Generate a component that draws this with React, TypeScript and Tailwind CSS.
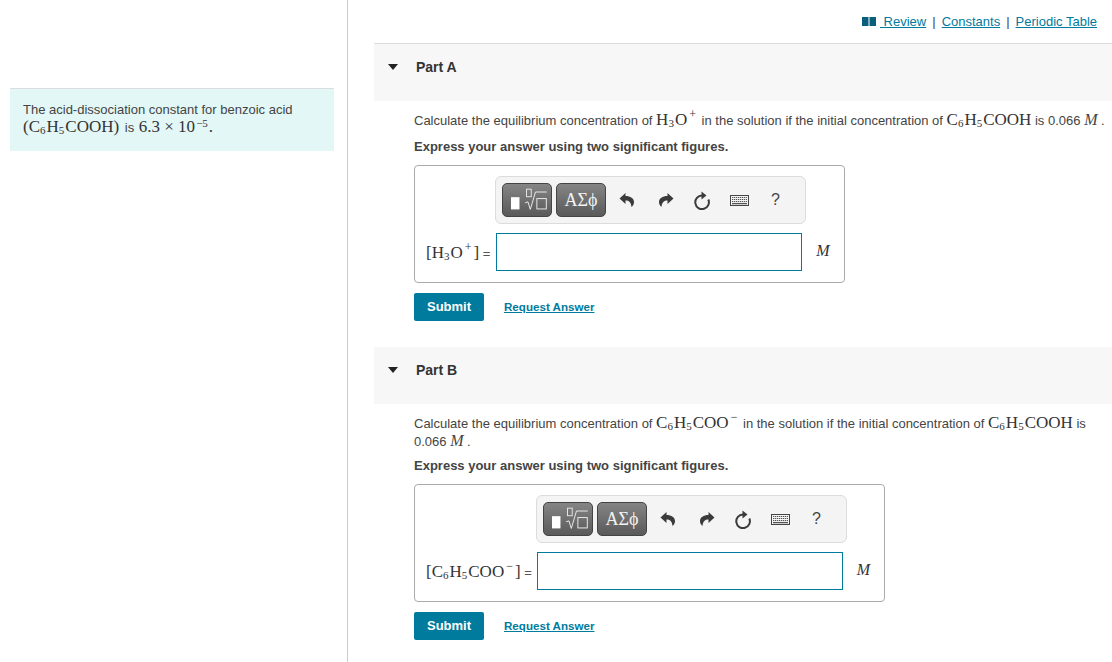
import type { ReactNode } from 'react';

const serif = "font-['Liberation_Serif',serif]";

function Sub({ children }: { children: ReactNode }) {
  return <sub className="static mr-[1px] align-[-2px] text-[11px] leading-none">{children}</sub>;
}

function Sup({ children }: { children: ReactNode }) {
  return <sup className="static ml-[2px] mr-[2px] align-[7px] text-[12px] leading-none">{children}</sup>;
}

function Math({ children }: { children: ReactNode }) {
  return <span className={`${serif} text-[17px] leading-none text-[#333]`}>{children}</span>;
}

function Benzoic() {
  return (
    <Math>
      C<Sub>6</Sub>H<Sub>5</Sub>COOH
    </Math>
  );
}

function UndoIcon({ flip }: { flip?: boolean }) {
  return (
    <svg viewBox="0 0 16 16" className={`h-[16px] w-[16px] ${flip ? '-scale-x-100' : ''}`} fill="#3b3b3b">
      <path d="M6.500 1 .5 6.500l6 5.500V8.500c3.500 0 5.500 1.500 6 6.500 2-1.500 2.500-3.500 2.500-5 0-3.500-3.500-6-8.500-6z" />
    </svg>
  );
}

function ResetIcon() {
  return (
    <svg viewBox="0 0 18 20" className="h-[20px] w-[18px]" fill="none">
      <path d="M9 5.500A6.800 6.800 0 1 0 15.300 9.500" stroke="#3b3b3b" strokeWidth="2" />
      <path d="M8.500 1.500v8l5-4z" fill="#3b3b3b" />
    </svg>
  );
}

function KeyboardIcon() {
  return (
    <svg viewBox="0 0 19 11" className="h-[11px] w-[19px]">
      <rect x="0.500" y="0.500" width="18" height="10" fill="#f4f4f4" stroke="#444" />
      <path d="M2 2.500h15M2 4.500h15M2 6.500h15" stroke="#555" strokeWidth="1.200" strokeDasharray="1.300 .7" />
      <path d="M2 8.600h15" stroke="#555" strokeWidth="1.300" />
    </svg>
  );
}

function TemplateGlyph() {
  return (
    <svg viewBox="0 0 50 34" className="h-full w-full" fill="none">
      <rect x="8" y="14" width="9" height="13" fill="#fff" />
      <rect x="24.500" y="5.500" width="5" height="8" stroke="#e8e8e8" />
      <path d="M23 20l3-1 2.500 8L34 8.500h12" stroke="#eee" strokeWidth="1" />
      <rect x="35.500" y="15.500" width="10" height="11" stroke="#eee" />
    </svg>
  );
}

function Toolbar() {
  const btn =
    'flex h-[34px] w-[50px] items-center justify-center rounded-[5px] border border-[#444] bg-linear-to-b from-[#858585] to-[#5a5a5a]';
  return (
    <div className="flex h-[48px] w-[311px] items-center rounded-[6px] border border-[#dcdcdc] bg-[#f4f4f4] pl-[6px]">
      <div className={btn}>
        <TemplateGlyph />
      </div>
      <div className={`${btn} ml-[4px] ${serif} text-[18px] text-[#f2f2f2]`}>ΑΣϕ</div>
      <div className="ml-[13px]">
        <UndoIcon />
      </div>
      <div className="ml-[23px]">
        <UndoIcon flip />
      </div>
      <div className="ml-[19px]">
        <ResetIcon />
      </div>
      <div className="ml-[19px]">
        <KeyboardIcon />
      </div>
      <div className="ml-[22px] text-[16px] text-[#444]">?</div>
    </div>
  );
}

function AnswerBox({
  label,
  toolbarOffset,
  width,
  unitWidth,
}: {
  label: ReactNode;
  toolbarOffset: string;
  width: string;
  unitWidth: string;
}) {
  return (
    <div className={`rounded-[4px] border border-[#aaa] pb-[11px] pt-[10px] ${width}`}>
      <div className={`flex ${toolbarOffset}`}>
        <Toolbar />
      </div>
      <div className="mt-[9px] flex h-[38px] items-center pl-[11px]">
        <div className="flex-1 whitespace-nowrap text-[#555]">{label}</div>
        <div className="h-[38px] w-[306px] border border-[#007b9e] bg-white" />
        <div className={`${unitWidth} pb-[3px] text-center ${serif} text-[16px] italic text-[#333]`}>M</div>
      </div>
    </div>
  );
}

function Part({ title, children }: { title: string; children: ReactNode }) {
  return (
    <section>
      <div className="flex h-[57px] items-start bg-[#f7f7f7] pl-[14px] pt-[15px]">
        <div className="mt-[5px] h-0 w-0 border-x-[5.500px] border-t-[6px] border-x-transparent border-t-[#222]" />
        <h2 className="ml-[18px] text-[14px] font-bold leading-[16px] text-[#333]">{title}</h2>
      </div>
      <div className="pl-[40px]">{children}</div>
    </section>
  );
}

function Actions() {
  return (
    <div className="mt-[10px] flex items-center">
      <button className="h-[28px] w-[70px] rounded-[2px] bg-[#007b9e] text-[13px] font-bold text-white">Submit</button>
      <a className="ml-[20px] text-[11.6px] font-bold text-[#007b9e] underline">Request Answer</a>
    </div>
  );
}

export default function App() {
  return (
    <div className="flex h-[662px] w-[1112px] overflow-hidden bg-white text-[13px] text-[#444] font-['Liberation_Sans',Arial,sans-serif]">
      <aside className="w-[348px] shrink-0 border-r border-[#ccc] pl-[10px] pr-[13px] pt-[88px]">
        <div className="h-[63px] border-t border-[#d9dde0] bg-[#e2f7f6] pl-[13px] pt-[13px] leading-[16px]">
          The acid-dissociation constant for benzoic acid
          <br />
          <Math>(</Math>
          <Benzoic />
          <Math>)</Math> <span className="ml-[2px]">is</span>{' '}
          <Math>
            <span className="ml-[1px]">6.3 × 10</span>
            <sup className="static ml-[1px] mr-[1px] align-[5px] text-[11px] leading-none">−5</sup>.
          </Math>
        </div>
      </aside>

      <main className="min-w-0 flex-1 pl-[26px]">
        <div className="flex h-[44px] items-start justify-end border-b border-[#ddd] pr-[15px] pt-[14px] leading-[16px]">
          <svg viewBox="0 0 14 9" className="mt-[3px] h-[9px] w-[14px]" fill="#0a5f7c">
            <path d="M0 0h6.500v9H0zM7.500 0H14v9H7.500z" />
          </svg>
          <a className="ml-[4px] whitespace-pre text-[#007b9e] underline"> Review</a>
          <span className="mx-[6px]">|</span>
          <a className="text-[#007b9e] underline">Constants</a>
          <span className="mx-[6px]">|</span>
          <a className="text-[#007b9e] underline">Periodic Table</a>
        </div>

        <Part title="Part A">
          <p className="mt-[7px] whitespace-nowrap leading-[20px]">
            Calculate the equilibrium concentration of{' '}
            <Math>
              H<Sub>3</Sub>O<Sup>+</Sup>
            </Math>{' '}
            in the solution if the initial concentration of <Benzoic /> is 0.066{' '}
            <span className={`${serif} text-[16px] italic`}>M</span> .
          </p>
          <p className="mt-[6px] font-bold leading-[20px]">Express your answer using two significant figures.</p>
          <div className="mt-[8px]">
            <AnswerBox
              width="w-[431px]"
              toolbarOffset="pl-[80px]"
              unitWidth="w-[42px]"
              label={
                <span>
                  <Math>
                    [H<Sub>3</Sub>O<Sup>+</Sup>]
                  </Math>{' '}
                  =
                </span>
              }
            />
          </div>
          <Actions />
        </Part>

        <div className="mt-[26px]">
          <Part title="Part B">
            <p className="mt-[7px] w-[690px] leading-[17px]">
              Calculate the equilibrium concentration of{' '}
              <Math>
                C<Sub>6</Sub>H<Sub>5</Sub>COO<Sup>−</Sup>
              </Math>{' '}
              in the solution if the initial concentration of <Benzoic /> is 0.066{' '}
              <span className={`${serif} text-[16px] italic`}>M</span> .
            </p>
            <p className="mt-[6px] font-bold leading-[20px]">Express your answer using two significant figures.</p>
            <div className="mt-[8px]">
              <AnswerBox
                width="w-[471px]"
                toolbarOffset="pl-[121px]"
                unitWidth="w-[41px]"
                label={
                  <span>
                    <Math>
                      [C<Sub>6</Sub>H<Sub>5</Sub>COO<Sup>−</Sup>]
                    </Math>{' '}
                    =
                  </span>
                }
              />
            </div>
            <Actions />
          </Part>
        </div>
      </main>
    </div>
  );
}
